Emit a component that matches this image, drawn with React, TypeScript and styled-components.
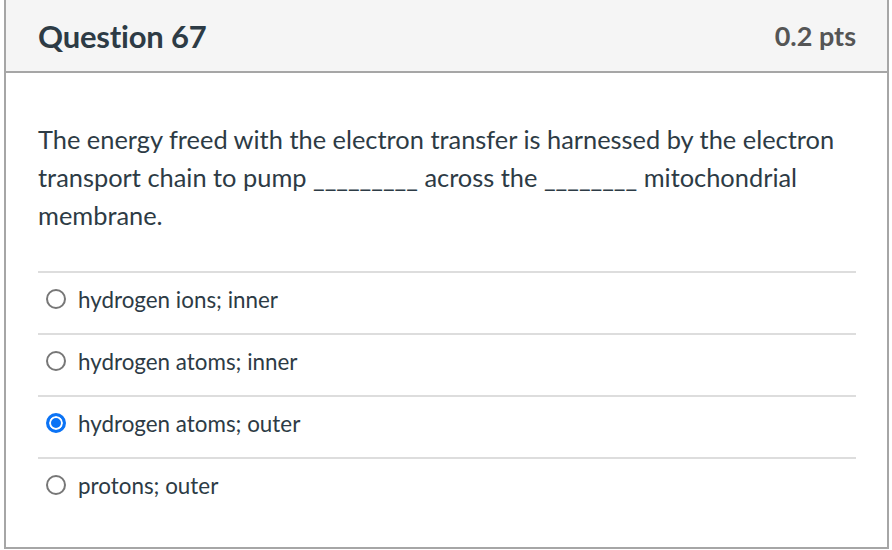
import React, { useState } from 'react';
import styled, { createGlobalStyle } from 'styled-components';

const GlobalStyle = createGlobalStyle`
  html, body {
    margin: 0;
    padding: 0;
    background: #ffffff;
  }
  body {
    font-family: Lato, "Open Sans", "Liberation Sans", sans-serif;
  }
`;

interface AnswerOption {
    id: string;
    label: string;
}

const answers: AnswerOption[] = [
    { id: 'a', label: 'hydrogen ions; inner' },
    { id: 'b', label: 'hydrogen atoms; inner' },
    { id: 'c', label: 'hydrogen atoms; outer' },
    { id: 'd', label: 'protons; outer' },
];

const App: React.FC = () => {
    const [selected, setSelected] = useState<string>('c');

    return (
        <>
            <GlobalStyle />
            <QuestionCard>
                <Header>
                    <Title>Question 67</Title>
                    <Points>0.2 pts</Points>
                </Header>
                <Body>
                    <QuestionText>
                        The energy freed with the electron transfer is harnessed by the electron transport chain to pump
                        _________ across the ________ mitochondrial membrane.
                    </QuestionText>
                    <AnswerList>
                        {answers.map(answer => (
                            <AnswerRow key={answer.id}>
                                <Radio
                                    type="radio"
                                    name="q67"
                                    checked={selected === answer.id}
                                    onChange={() => setSelected(answer.id)}
                                />
                                <AnswerLabel>{answer.label}</AnswerLabel>
                            </AnswerRow>
                        ))}
                    </AnswerList>
                </Body>
            </QuestionCard>
        </>
    );
};

const QuestionCard = styled('div')({
    width: '885px',
    height: '549px',
    marginLeft: '4px',
    boxSizing: 'border-box',
    borderLeft: '2px solid #a6a6a6',
    borderRight: '2px solid #a6a6a6',
    borderBottom: '2px solid #a6a6a6',
    display: 'flex',
    flexDirection: 'column',
    background: '#ffffff',
});

const Header = styled('div')({
    height: '71px',
    flexShrink: 0,
    display: 'flex',
    alignItems: 'center',
    justifyContent: 'space-between',
    padding: '0 31px 0 32px',
    background: '#f5f5f5',
    borderBottom: '2px solid #a6a6a6',
});

const Title = styled('h2')({
    margin: 0,
    fontSize: '31px',
    fontWeight: 700,
    color: '#2d3b45',
    letterSpacing: '-0.2px',
});

const Points = styled('div')({
    fontSize: '27px',
    fontWeight: 700,
    color: '#555555',
});

const Body = styled('div')({
    padding: '47px 31px 0 32px',
});

const QuestionText = styled('p')({
    margin: 0,
    fontSize: '25.4px',
    lineHeight: '38px',
    color: '#2d3b45',
});

const AnswerList = styled('div')({
    marginTop: '37px',
    borderTop: '2px solid #dddddd',
});

const AnswerRow = styled('label')({
    display: 'flex',
    alignItems: 'center',
    height: '52px',
    paddingBottom: '8px',
    gap: '12px',
    paddingLeft: '8px',
    borderBottom: '2px solid #dddddd',
    cursor: 'pointer',
    '&:last-child': {
        borderBottom: 'none',
    },
});

const Radio = styled('input')({
    appearance: 'none',
    margin: 0,
    width: '20px',
    height: '20px',
    borderRadius: '50%',
    border: '2px solid #777777',
    boxSizing: 'border-box',
    background: '#ffffff',
    cursor: 'pointer',
    '&:checked': {
        border: '3px solid #0b73f5',
        boxShadow: 'inset 0 0 0 2px #ffffff',
        background: '#0b73f5',
    },
});

const AnswerLabel = styled('span')({
    fontSize: '22.4px',
    color: '#2d3b45',
});

export default App;
